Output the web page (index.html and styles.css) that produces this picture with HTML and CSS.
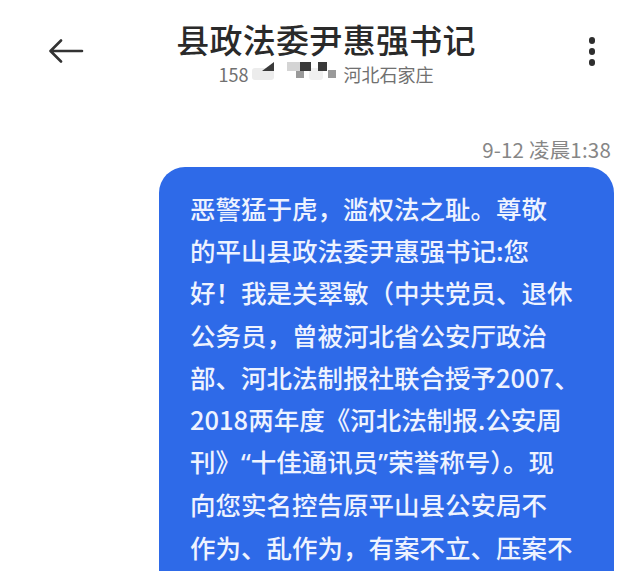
FILE: index.html
```html
<!DOCTYPE html>
<html lang="zh-CN">
<head>
<meta charset="utf-8">
<link rel="stylesheet" href="styles.css">
</head>
<body>
<div class="screen">
  <header class="topbar">
    <div class="back">
      <svg width="36" height="24" viewBox="0 0 36 24"><path d="M34 12H3M13 1.5L2.5 12 13 22.5" fill="none" stroke="#333" stroke-width="2.6" stroke-linecap="round" stroke-linejoin="round"/></svg>
    </div>
    <div class="center">
      <div class="title">县政法委尹惠强书记</div>
      <div class="censor">
        <span class="c1"></span><span class="c2"></span><span class="c3"></span><span class="c4"></span>
      </div>
      <div class="sub">
        <span class="num">158</span>
        <span class="blur b1"></span>
        <span class="sq"></span>
        <span class="blur b2"></span>
        <span class="sq"></span>
        <span class="city">河北石家庄</span>
      </div>
    </div>
    <div class="more">
      <span class="dot"></span><span class="dot"></span><span class="dot"></span>
    </div>
  </header>
  <div class="time">9-12 凌晨1:38</div>
  <div class="row">
    <div class="bubble">
      <span class="ln">恶警猛于虎，滥权法之耻。尊敬</span>
      <span class="ln">的平山县政法委尹惠强书记:您</span>
      <span class="ln">好！我是关翠敏（中共党员、退休</span>
      <span class="ln">公务员，曾被河北省公安厅政治</span>
      <span class="ln">部、河北法制报社联合授予2007、</span>
      <span class="ln">2018两年度《河北法制报.公安周</span>
      <span class="ln">刊》<span class="q">“</span>十佳通讯员<span class="q">”</span>荣誉称号）。现</span>
      <span class="ln">向您实名控告原平山县公安局不</span>
      <span class="ln">作为、乱作为，有案不立、压案不</span>
    </div>
  </div>
</div>
</body>
</html>
```
FILE: styles.css
```css
html, body {
  margin: 0;
  padding: 0;
  background: #ffffff;
}
body {
  font-family: "Noto Sans CJK SC", "Noto Sans", sans-serif;
  width: 640px;
  height: 571px;
  overflow: hidden;
}
.screen {
  display: flex;
  flex-direction: column;
}
.topbar {
  display: flex;
  align-items: flex-start;
  padding: 0 44px 0 48px;
  height: 130px;
}
.back {
  width: 36px;
  height: 24px;
  margin-top: 39px;
  display: flex;
}
.center {
  flex: 1;
  display: flex;
  flex-direction: column;
  align-items: center;
  padding-right: 20px;
  position: relative;
}
.title {
  font-size: 33px;
  font-weight: 500;
  color: #2a2a2a;
  line-height: 40px;
  margin-top: 19px;
  letter-spacing: 0.3px;
}
.censor {
  position: absolute;
  top: 62px;
  left: 0;
  display: flex;
  padding-left: 178px;
}
.censor span {
  display: block;
  height: 9px;
}
.censor .c1 { width: 12px; background: #3a3a3a; margin-right: 13px; clip-path: polygon(100% 0, 100% 100%, 0 100%); }
.censor .c2 { width: 13px; background: #d4d4d4; }
.censor .c3 { width: 11px; background: #3a3a3a; margin-right: 7px; }
.censor .c4 { width: 9px; background: #3a3a3a; }
.sub {
  display: flex;
  align-items: center;
  margin-top: 2px;
  font-size: 18px;
  line-height: 26px;
  color: #707070;
}
.num {
  margin-right: 4px;
}
.blur {
  display: block;
  height: 12px;
  background: #ececec;
  border-radius: 3px;
}
.b1 { width: 22px; margin-right: 22px; }
.b2 { width: 14px; margin: 0 5px; background: #f0f0f0; }
.sq {
  display: block;
  width: 8px;
  height: 8px;
  background: #9a9a9a;
}
.city {
  margin-left: 7px;
}
.more {
  width: 8px;
  margin-top: 37px;
  display: flex;
  flex-direction: column;
  align-items: center;
  gap: 4.5px;
}
.dot {
  display: block;
  width: 6.5px;
  height: 6.5px;
  border-radius: 50%;
  background: #2e2e2e;
}
.time {
  align-self: flex-end;
  margin-right: 29px;
  margin-top: 6px;
  font-size: 20.5px;
  line-height: 26px;
  color: #868686;
  letter-spacing: 0.2px;
}
.row {
  display: flex;
  justify-content: flex-end;
  padding-right: 26px;
  margin-top: 5px;
}
.bubble {
  width: 455px;
  box-sizing: border-box;
  background: #2e6ae8;
  border-radius: 26px;
  padding: 20px 20px 20px 31px;
  color: #eef3ff;
  font-size: 25.5px;
  font-weight: 500;
  line-height: 42.2px;
  height: 460px;
}
.ln {
  display: block;
  white-space: nowrap;
}
.q {
  font-family: "Noto Sans", sans-serif;
}
```
